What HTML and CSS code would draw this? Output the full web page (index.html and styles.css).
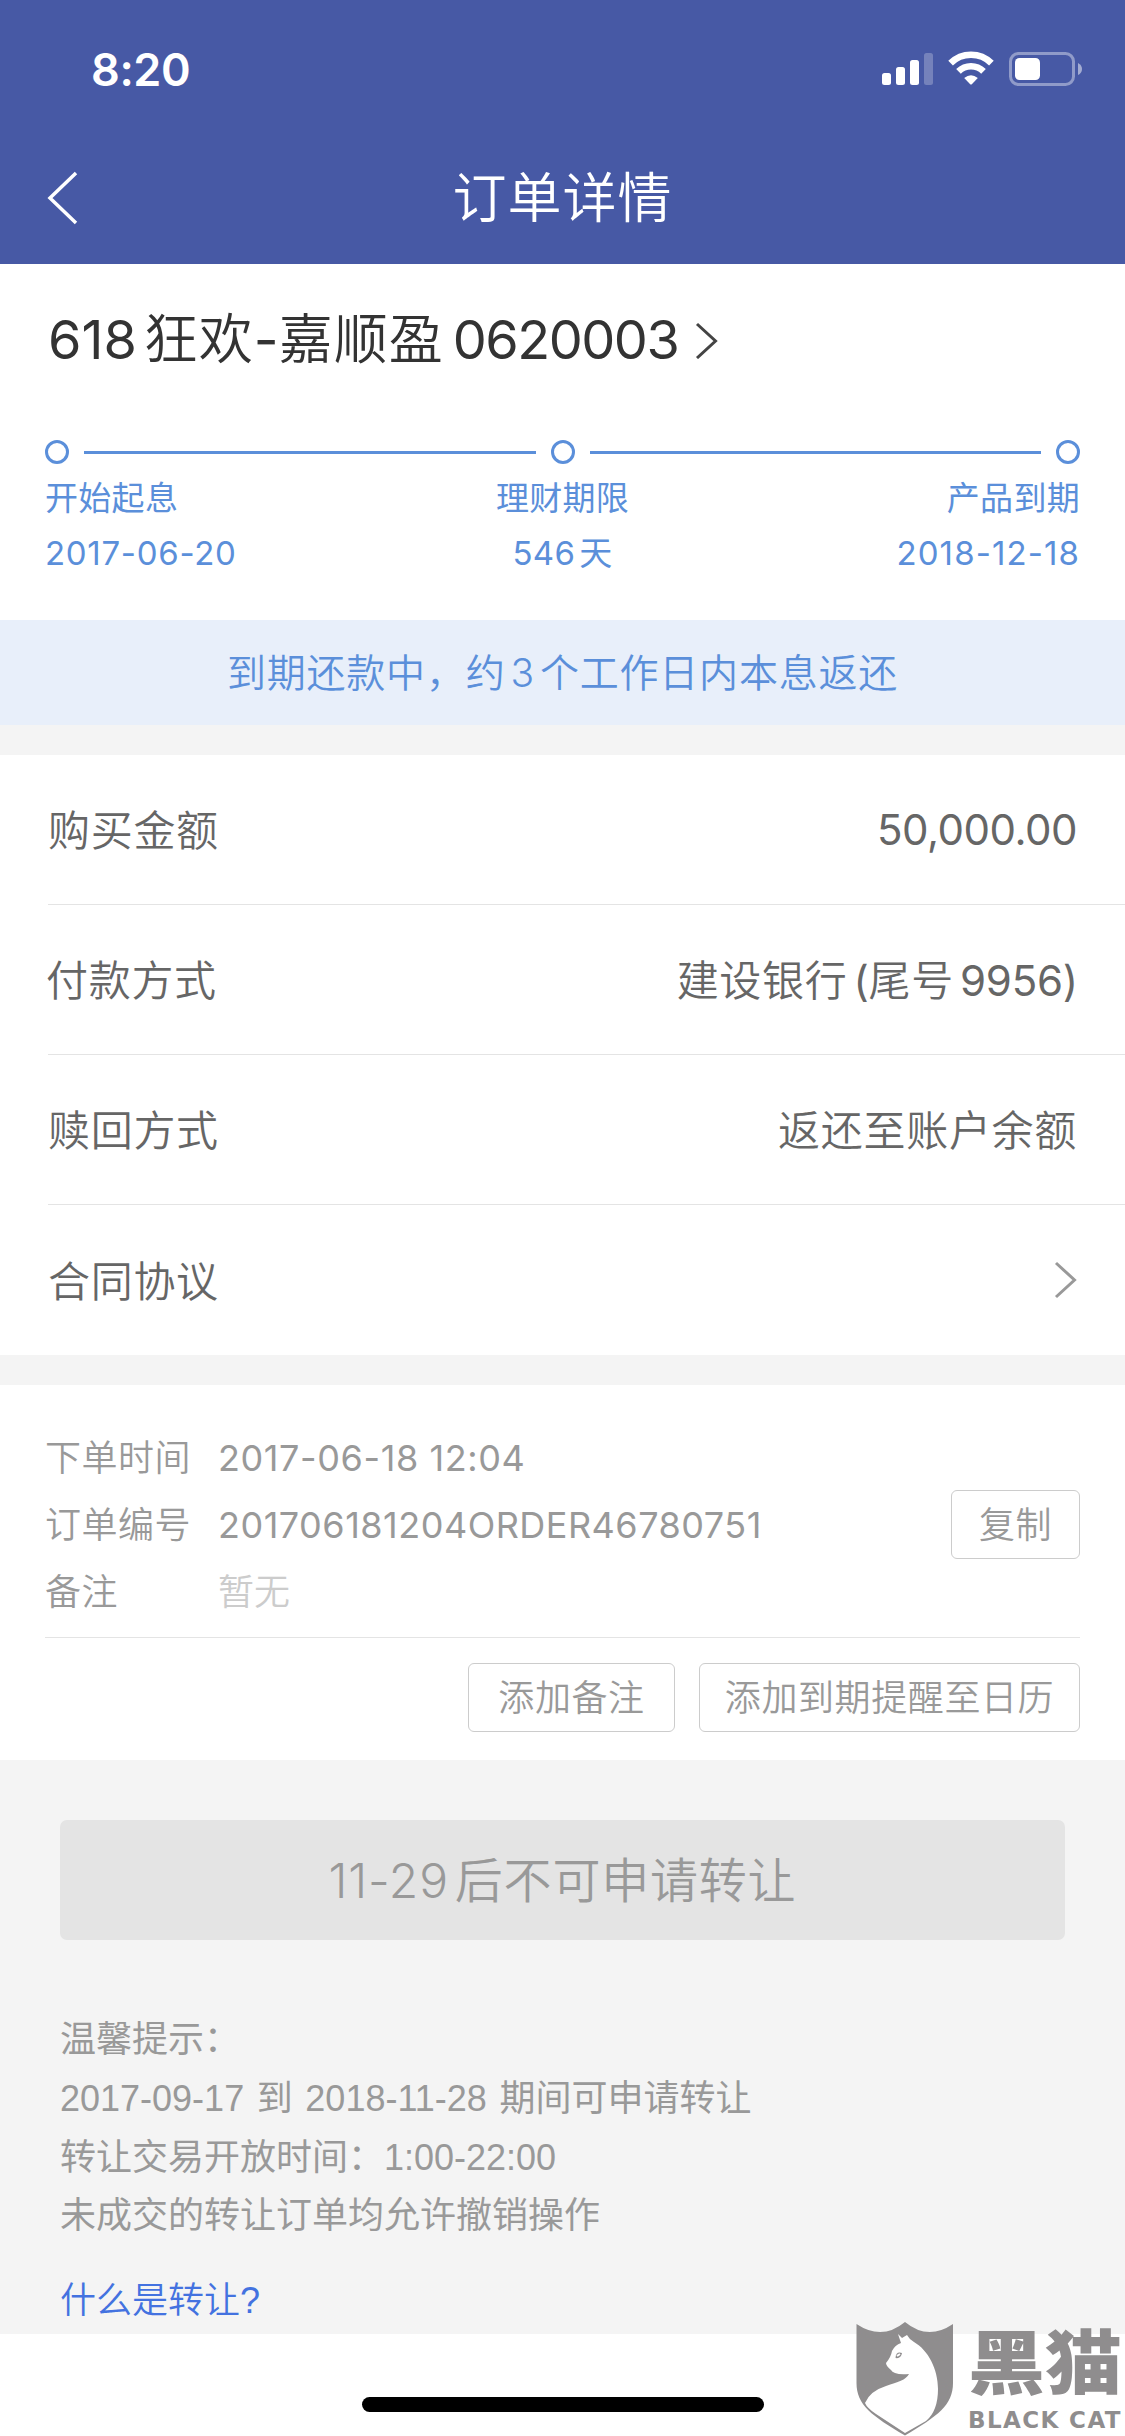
FILE: index.html
```html
<!DOCTYPE html>
<html lang="zh-CN">
<head>
    <meta charset="UTF-8">
    <meta name="viewport" content="width=device-width, initial-scale=1.0">
    <title>订单详情</title>
    <link rel="stylesheet" href="styles.css">
</head>
<body>
    <header>
        <div class="status_bar">
            <span class="clock">8:20</span>
            <svg class="status_icons" width="202" height="36" viewBox="0 0 202 36">
                <g fill="#fff">
                    <rect x="0" y="22" width="9" height="12" rx="2.5"/>
                    <rect x="14" y="16" width="9" height="18" rx="2.5"/>
                    <rect x="28" y="9" width="9" height="25" rx="2.5"/>
                    <rect x="42" y="2" width="9" height="32" rx="2.5" opacity=".25"/>
                </g>
                <g fill="none" stroke="#fff" stroke-width="6.6">
                    <path d="M68.600 12.200A29 29 0 0 1 109.400 12.200"/>
                    <path d="M76.500 20.400A17.800 17.800 0 0 1 101.500 20.400"/>
                </g>
                <path d="M82.200 27Q89 21.500 95.800 27L89.800 33.200Q89 34 88.200 33.200Z" fill="#fff"/>
                <rect x="128.500" y="2.500" width="63" height="31" rx="8" fill="none" stroke="#fff" stroke-width="3" opacity=".4"/>
                <rect x="133" y="7" width="25" height="22" rx="4.500" fill="#fff"/>
                <path d="M196 12Q200 14 200 18T196 24Z" fill="#fff" opacity=".5"/>
            </svg>
        </div>
        <nav>
            <svg class="back" width="32" height="56" viewBox="0 0 32 56">
                <path d="M30 3L4 28L30 53" fill="none" stroke="#fff" stroke-width="3.500"/>
            </svg>
            <h1>订单详情</h1>
        </nav>
    </header>
    <main>
        <section class="product">
            <h2><span class="prefix">618</span><span class="cjk">狂欢</span><span>-</span><span class="cjk">嘉顺盈</span><span class="serial">0620003</span>
                <svg width="24" height="38" viewBox="0 0 24 38">
                    <path d="M2 3L20.500 20L2 37" fill="none" stroke="#444" stroke-width="3"/>
                </svg>
            </h2>
            <div class="timeline">
                <i class="dot"></i><i class="line"></i><i class="dot"></i><i class="line"></i><i class="dot"></i>
            </div>
            <div class="steps">
                <div class="step">
                    <p>开始起息</p>
                    <p class="date">2017-06-20</p>
                </div>
                <div class="step center">
                    <p>理财期限</p>
                    <p class="days"><span>546</span>天</p>
                </div>
                <div class="step right">
                    <p>产品到期</p>
                    <p class="date">2018-12-18</p>
                </div>
            </div>
        </section>
        <p class="notice">到期还款中，约<span>3</span>个工作日内本息返还</p>

        <section class="list">
            <div class="row"><span>购买金额</span><span class="amount">50,000.00</span></div>
            <div class="row pay"><span>付款方式</span><span>建设银行<b>(</b>尾号<b>9956)</b></span></div>
            <div class="row"><span>赎回方式</span><span>返还至账户余额</span></div>
            <div class="row"><span>合同协议</span>
                <svg width="24" height="38" viewBox="0 0 24 38">
                    <path d="M3 2L21.500 19L3 36" fill="none" stroke="#999" stroke-width="3"/>
                </svg>
            </div>
        </section>

        <section class="order">
            <div class="info"><span class="key">下单时间</span><span class="value time">2017-06-18 12:04</span></div>
            <div class="info"><span class="key">订单编号</span><span class="value">201706181204ORDER46780751</span><button class="copy">复制</button></div>
            <div class="info"><span class="key">备注</span><span class="empty">暂无</span></div>
            <div class="actions">
                <button class="remark">添加备注</button>
                <button class="remind">添加到期提醒至日历</button>
            </div>
        </section>

        <section class="transfer">
            <button class="disabled" disabled><span>11-29</span>后不可申请转让</button>
            <div class="hints">
                <p>温馨提示：</p>
                <p>2017-09-17 到 2018-11-28 期间可申请转让</p>
                <p>转让交易开放时间：1:00-22:00</p>
                <p>未成交的转让订单均允许撤销操作</p>
            </div>
            <a class="link">什么是转让?</a>
        </section>
    </main>
    <footer><div class="home_bar"></div></footer>

    <div class="watermark">
        <svg width="98" height="116" viewBox="0 0 98 116">
            <path d="M0.500 3Q26 20 49 1Q72 20 97 3V62C97 84 82 95 49 114.500C16 95 0.500 84 0.500 62Z" fill="#8f8d8e"/>
            <path d="M42 13L46 17L51 14Q53 18 58 21C72 29 82 48 82 68Q82 90 70 100L49 112L20 93Q11 87 9 82Q14 70 30 65C42 61 50 59 53 53Q44 54 39 52Q36 51 35 49Q30 45 30 42Q35 36 36 30Q39 24 45 22Z" fill="#fff"/>
            <path d="M39.500 37Q40 30 46 32Q45 38 39.500 37Z" fill="#8f8d8e"/>
            <path d="M41 35L44 33" stroke="#fff" stroke-width="2"/>
        </svg>
        <div class="brand">
            <span class="brand_cn">黑猫</span>
            <span class="brand_en">BLACK CAT</span>
        </div>
    </div>
</body>
</html>
```

FILE: styles.css
```css
* {
    box-sizing: border-box;
}
body, h1, h2, p, button {
    margin: 0;
    padding: 0;
    font-weight: normal;
}
body {
    width: 1125px;
    height: 2436px;
    position: relative;
    overflow: hidden;
    background-color: #fff;
    font-family: Inter, "Noto Sans CJK SC", sans-serif;
}
svg {
    display: block;
    flex: none;
}
header {
    height: 264px;
    background-color: #4759a5;
    color: #fff;
}
.status_bar {
    height: 132px;
    padding: 6px 41px 0 91px;
    display: flex;
    align-items: center;
    justify-content: space-between;
}
.clock {
    font-size: 45px;
    font-weight: 600;
    letter-spacing: -0.4px;
}
nav {
    height: 132px;
    padding: 0 46px 1px;
    display: grid;
    grid-template-columns: 32px 1fr 32px;
    align-items: center;
}
h1 {
    padding-bottom: 6px;
    font-size: 54px;
    font-weight: 350;
    letter-spacing: 1px;
    text-align: center;
}

/* Product and timeline */
.product {
    height: 356px;
    padding: 36px 45px 0;
}
h2 {
    height: 80px;
    display: flex;
    align-items: center;
    padding-left: 3px;
    font-size: 54px;
    line-height: 80px;
    color: #333;
}
h2 svg {
    margin-left: 17px;
}
.cjk {
    font-weight: 350;
    letter-spacing: 1px;
}
.prefix {
    margin-right: 7px;
}
.serial {
    margin-left: 9px;
    letter-spacing: -1.5px;
}
.timeline {
    height: 24px;
    margin-top: 60px;
    display: flex;
    align-items: center;
    gap: 15px;
}
.dot {
    width: 24px;
    height: 24px;
    border: 3px solid #5b8fda;
    border-radius: 50%;
}
.line {
    flex: 1;
    height: 3px;
    background-color: #5b8fda;
}
.steps {
    display: grid;
    grid-template-columns: 1fr 1fr 1fr;
    padding-top: 7px;
    color: #5b8fda;
    font-size: 33px;
    font-weight: 350;
    line-height: 55px;
    letter-spacing: 0.3px;
}
.date {
    letter-spacing: 0.7px;
}
.days span {
    margin-right: 4px;
}
.center {
    text-align: center;
}
.right {
    text-align: right;
}
.right .date {
    letter-spacing: 1.1px;
}
.notice {
    height: 105px;
    line-height: 105px;
    text-align: center;
    font-size: 39px;
    font-weight: 350;
    letter-spacing: 0.8px;
    color: #5b8fda;
    background-color: #e8effa;
}
.notice span {
    margin: 0 5px;
}

/* Payment rows */
.list {
    border-top: 30px solid #f4f4f4;
    border-bottom: 30px solid #f4f4f4;
    padding-left: 48px;
    color: #666;
    font-size: 42px;
    font-weight: 350;
}
.row {
    height: 150px;
    padding-right: 48px;
    display: flex;
    align-items: center;
    justify-content: space-between;
    border-bottom: 1px solid #e4e4e4;
    letter-spacing: 0.7px;
}
.row:last-child {
    border-bottom: none;
}
.row span {
    padding-bottom: 4px;
}
.row .amount {
    padding-bottom: 0;
    font-weight: 400;
    letter-spacing: -0.5px;
}
.row b {
    font-weight: 400;
    margin-left: 6px;
    letter-spacing: -0.2px;
}
.pay {
    margin-right: -1px;
}
.pay span:first-child {
    margin-left: -2px;
}

/* Order details */
.order {
    height: 375px;
    padding: 39px 45px 0;
    color: #999;
    font-size: 36px;
    font-weight: 350;
}
.info {
    height: 67px;
    display: flex;
    align-items: center;
}
.key {
    width: 173px;
    padding-bottom: 5px;
    letter-spacing: 0.5px;
}
.value {
    font-weight: 400;
    letter-spacing: 0.5px;
}
.time {
    letter-spacing: 0.6px;
}
.empty {
    padding-bottom: 5px;
    color: #ccc;
}
.order button {
    height: 69px;
    padding-bottom: 5px;
    border: 1px solid #ccc;
    border-radius: 6px;
    background-color: #fff;
    font: inherit;
    color: #999;
    letter-spacing: 0.6px;
}
.order .copy {
    width: 129px;
    margin-left: auto;
}
.actions {
    margin-top: 12px;
    padding-top: 25px;
    border-top: 1px solid #e4e4e4;
    display: flex;
    justify-content: flex-end;
    gap: 24px;
}
.remark {
    width: 207px;
}
.remind {
    width: 381px;
}

/* Transfer */
.transfer {
    height: 574px;
    padding: 60px 60px 0;
    background-color: #f4f4f4;
}
.disabled {
    width: 100%;
    height: 120px;
    padding-bottom: 6px;
    border: none;
    border-radius: 7px;
    background-color: #e4e4e4;
    color: #999;
    font-family: inherit;
    font-size: 48px;
    font-weight: 350;
    letter-spacing: 0.8px;
}
.disabled span {
    margin-right: 6px;
}
.hints, .link {
    font-family: "Liberation Sans", "Noto Sans CJK SC", sans-serif;
    font-size: 36px;
    font-weight: 350;
}
.hints {
    margin-top: 71px;
    line-height: 58.8px;
    word-spacing: 2.6px;
    color: #999;
}
.link {
    display: block;
    margin-top: 26px;
    line-height: 58px;
    color: #4372e0;
}
footer {
    height: 102px;
    padding-top: 63px;
}
.home_bar {
    width: 402px;
    height: 15px;
    margin: 0 auto;
    border-radius: 8px;
    background-color: #000;
}

/* Logo stamped over the bottom right corner */
.watermark {
    position: absolute;
    left: 856px;
    top: 2321px;
    display: flex;
    gap: 14px;
    color: #8f8d8e;
}
.brand {
    display: flex;
    flex-direction: column;
    white-space: nowrap;
}
.brand_cn {
    height: 86px;
    line-height: 84px;
    font-size: 77px;
    font-weight: 900;
    transform: scaleY(0.91);
}
.brand_en {
    line-height: 26px;
    font-family: "DejaVu Sans", sans-serif;
    font-size: 23px;
    font-weight: bold;
    letter-spacing: 1.4px;
}
```
